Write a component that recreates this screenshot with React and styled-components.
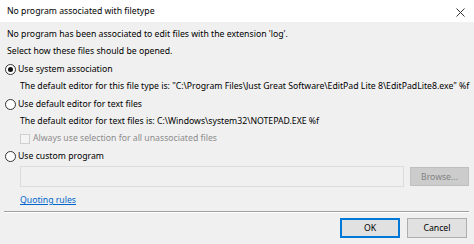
import React from "react";
import styled, { createGlobalStyle } from "styled-components";

const Global = createGlobalStyle`
  html, body { margin: 0; padding: 0; background: #f0f0f0; }
  body { font-family: "Noto Sans", "Open Sans", sans-serif; font-size: 8.7px; color: #000; }
`;

export default function App() {
  return (
    <>
      <Global />
      <Dialog>
        <TitleBar>
          <Title>No program associated with filetype</Title>
          <Close>
            <svg width="9" height="9" viewBox="0 0 9 9">
              <path d="M0.5 0.5 L8.5 8.5 M8.5 0.5 L0.5 8.5" stroke="#333" strokeWidth="1" />
            </svg>
          </Close>
        </TitleBar>
        <Body>
          <Line>No program has been associated to edit files with the extension 'log'.</Line>
          <Line>Select how these files should be opened.</Line>
          <Option>
            <Radio $checked />
            Use system association
          </Option>
          <Line $indent>
            The default editor for this file type is: "C:\Program Files\Just Great Software\EditPad Lite 8\EditPadLite8.exe" %f
          </Line>
          <Option>
            <Radio />
            Use default editor for text files
          </Option>
          <Line $indent>The default editor for text files is: C:\Windows\system32\NOTEPAD.EXE %f</Line>
          <Line $indent $muted>
            <Check />
            Always use selection for all unassociated files
          </Line>
          <Option>
            <Radio />
            Use custom program
          </Option>
          <ProgramRow>
            <PathInput />
            <Browse>Browse...</Browse>
          </ProgramRow>
          <LinkRow>
            <Link href="#">Quoting rules</Link>
          </LinkRow>
        </Body>
        <Separator />
        <Footer>
          <Button $default>OK</Button>
          <Button>Cancel</Button>
        </Footer>
      </Dialog>
    </>
  );
}

const Dialog = styled.div`
  width: 474px;
  height: 244px;
  display: flex;
  flex-direction: column;
  background: #f0f0f0;
  overflow: hidden;
`;

const TitleBar = styled.div`
  height: 22px;
  background: #fff;
  display: flex;
  align-items: center;
  justify-content: space-between;
  padding: 0 9px 0 7px;
`;

const Title = styled.span`
  color: #000;
`;

const Close = styled.span`
  display: flex;
  align-items: center;
  margin-top: 2px;
`;

const Body = styled.div`
  padding: 4px 0 0 7px;
  display: flex;
  flex-direction: column;
`;

const Line = styled.div`
  height: 17.4px;
  line-height: 17.4px;
  white-space: nowrap;
  display: flex;
  align-items: center;
  padding-left: ${(p) => (p.$indent ? "13px" : "0")};
  color: ${(p) => (p.$muted ? "#8c8c8c" : "#000")};
`;

const Option = styled(Line)`
  margin-left: -2px;
  gap: 2px;
`;

const Radio = styled.span`
  width: 11px;
  height: 11px;
  border-radius: 50%;
  border: 1px solid #333;
  background: #fff;
  box-sizing: border-box;
  position: relative;
  flex: none;
  &::after {
    content: "";
    display: ${(p) => (p.$checked ? "block" : "none")};
    position: absolute;
    inset: 2px;
    border-radius: 50%;
    background: #111;
  }
`;

const Check = styled.span`
  width: 10px;
  height: 10px;
  border: 1px solid #cfcfcf;
  background: #f4f4f4;
  box-sizing: border-box;
  margin-right: 3px;
  flex: none;
`;

const ProgramRow = styled.div`
  display: flex;
  align-items: center;
  gap: 6px;
  padding-left: 13px;
  margin-top: 1px;
  height: 21px;
`;

const PathInput = styled.div`
  width: 384px;
  height: 21px;
  box-sizing: border-box;
  border: 1px solid #dcdcdc;
  background: #f0f0f0;
`;

const Browse = styled.div`
  width: 59px;
  height: 19px;
  box-sizing: border-box;
  background: #cccccc;
  border: 1px solid #bfbfbf;
  color: #838383;
  display: flex;
  align-items: center;
  justify-content: center;
`;

const LinkRow = styled.div`
  padding: 4px 0 0 13px;
  height: 18px;
  line-height: 18px;
`;

const Link = styled.a`
  color: #0066cc;
  text-decoration: underline;
`;

const Separator = styled.div`
  margin: 2px 5px 0 4px;
  height: 1px;
  background: #a0a0a0;
  border-bottom: 1px solid #fff;
`;

const Footer = styled.div`
  display: flex;
  justify-content: flex-end;
  gap: 7px;
  padding: 5px 7px 0 0;
`;

const Button = styled.div`
  width: 60px;
  height: 20px;
  box-sizing: border-box;
  background: #e1e1e1;
  border: ${(p) => (p.$default ? "2px solid #0078d7" : "1px solid #adadad")};
  display: flex;
  align-items: center;
  justify-content: center;
  color: #000;
`;
